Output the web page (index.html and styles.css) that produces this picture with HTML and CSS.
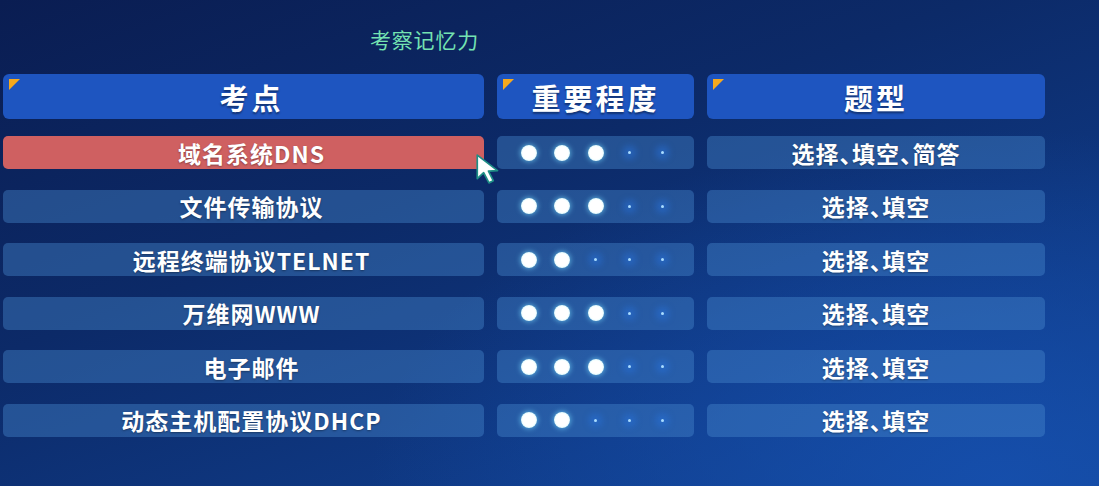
FILE: index.html
```html
<!DOCTYPE html>
<html lang="zh-CN">
<head>
<meta charset="utf-8">
<title>考察记忆力</title>
<link rel="stylesheet" href="styles.css">
</head>
<body>
<div class="page">
  <div class="title">考察记忆力</div>
  <div class="table">
    <div class="row head">
      <div class="cell c1"><span class="tri"></span>考点</div>
      <div class="cell c2"><span class="tri"></span>重要程度</div>
      <div class="cell c3"><span class="tri"></span>题型</div>
    </div>
    <div class="row">
      <div class="cell c1 active">域名系统DNS</div>
      <div class="cell c2 dots"><i class="on"></i><i class="on"></i><i class="on"></i><i></i><i></i></div>
      <div class="cell c3">选择、填空、简答</div>
    </div>
    <div class="row">
      <div class="cell c1">文件传输协议</div>
      <div class="cell c2 dots"><i class="on"></i><i class="on"></i><i class="on"></i><i></i><i></i></div>
      <div class="cell c3">选择、填空</div>
    </div>
    <div class="row">
      <div class="cell c1">远程终端协议TELNET</div>
      <div class="cell c2 dots"><i class="on"></i><i class="on"></i><i></i><i></i><i></i></div>
      <div class="cell c3">选择、填空</div>
    </div>
    <div class="row">
      <div class="cell c1">万维网WWW</div>
      <div class="cell c2 dots"><i class="on"></i><i class="on"></i><i class="on"></i><i></i><i></i></div>
      <div class="cell c3">选择、填空</div>
    </div>
    <div class="row">
      <div class="cell c1">电子邮件</div>
      <div class="cell c2 dots"><i class="on"></i><i class="on"></i><i class="on"></i><i></i><i></i></div>
      <div class="cell c3">选择、填空</div>
    </div>
    <div class="row">
      <div class="cell c1">动态主机配置协议DHCP</div>
      <div class="cell c2 dots"><i class="on"></i><i class="on"></i><i></i><i></i><i></i></div>
      <div class="cell c3">选择、填空</div>
    </div>
  </div>
  <svg class="cursor" width="28" height="32" viewBox="0 0 26 30">
    <path d="M2 2 L2 24 L8 18.5 L13 28 L17 26 L12.5 17 L21 16.5 Z" fill="#ffffff" stroke="#1f8f86" stroke-width="1.6" stroke-linejoin="round"/>
  </svg>
</div>
</body>
</html>
```

FILE: styles.css
```css
* { box-sizing: border-box; }
html, body {
  margin: 0;
  padding: 0;
  width: 1099px;
  height: 486px;
  overflow: hidden;
}
body {
  font-family: "Noto Sans CJK SC", "Noto Sans", sans-serif;
  color: #ffffff;
  background:
    radial-gradient(ellipse 900px 500px at 1000px 480px, rgba(22, 80, 175, 0.85), rgba(22, 80, 175, 0) 70%),
    linear-gradient(160deg, #0a1d52 0%, #0c2a68 40%, #0f3a86 75%, #124596 100%);
}
.page {
  position: relative;
  padding: 24px 0 0 3px;
}
.title {
  margin-left: 367px;
  font-size: 21px;
  line-height: 30px;
  color: #74e3b2;
  letter-spacing: 0.8px;
  margin-bottom: 20px;
}
.table {
  display: flex;
  flex-direction: column;
  gap: 20.5px;
}
.row {
  display: flex;
  gap: 13px;
  height: 33px;
}
.row.head {
  height: 45px;
  margin-bottom: -3.5px;
}
.cell {
  position: relative;
  display: flex;
  align-items: center;
  justify-content: center;
  border-radius: 5px;
  background: rgba(72, 136, 206, 0.42);
  font-size: 23px;
  font-weight: 600;
  letter-spacing: 1px;
  font-feature-settings: "halt";
  text-shadow: 0 1px 2px rgba(0, 0, 0, 0.35);
}
.c1 { width: 481px; padding-left: 16px; }
.c2 { width: 197px; }
.c3 { width: 338px; }
.head .cell {
  background: #1e55c0;
  border-radius: 6px;
  font-size: 29px;
  font-weight: 700;
  letter-spacing: 3px;
  text-shadow: 0 2px 2px rgba(0, 0, 0, 0.4);
}
.tri {
  position: absolute;
  left: 6px;
  top: 5px;
  width: 11px;
  height: 11px;
  background: #f6a91d;
  clip-path: polygon(0 0, 100% 0, 0 100%);
}
.cell.active {
  background: #cf6061;
}
.dots {
  justify-content: flex-start;
  padding-left: 15px;
}
.dots i {
  width: 33.5px;
  display: flex;
  align-items: center;
  justify-content: center;
}
.dots i::before {
  content: "";
  width: 3px;
  height: 3px;
  border-radius: 50%;
  background: #a9dcff;
  box-shadow: 0 0 6px 5px rgba(40, 115, 225, 0.45);
}
.dots i.on::before {
  width: 16px;
  height: 16px;
  background: radial-gradient(circle, #ffffff 0%, #ffffff 55%, #d8fbff 72%, #7fe6f0 100%);
  box-shadow: 0 0 5px 1px rgba(120, 220, 255, 0.6);
}
.cursor {
  position: absolute;
  left: 475px;
  top: 153px;
}
```
